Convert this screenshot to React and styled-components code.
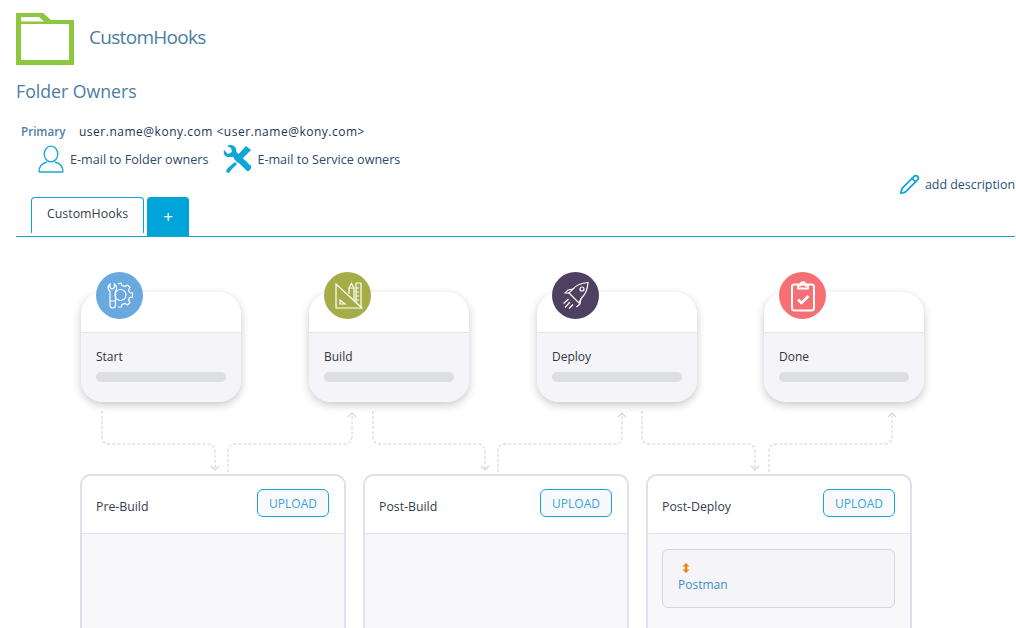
import React from "react";
import styled, { createGlobalStyle } from "styled-components";
import { Pencil } from "lucide-react";

const Global = createGlobalStyle`
  html, body { margin: 0; padding: 0; background: #fff; height: 628px; overflow: hidden; }
  body { font-family: "Open Sans", "Noto Sans", "Liberation Sans", sans-serif; color: #2b3a4a; }
`;

const Page = styled.div`
  width: 1016px;
  height: 628px;
  overflow: hidden;
  box-sizing: border-box;
  padding: 13px 1px 0 16px;
`;
const Header = styled.header`
  display: flex;
  align-items: flex-start;
  gap: 15px;
  height: 52px;
`;
const Title = styled.h1`
  margin: 10px 0 0;
  font-size: 19px;
  line-height: 28px;
  font-weight: 400;
  letter-spacing: -0.7px;
  color: #4a7da3;
`;
const SectionTitle = styled.h2`
  margin: 12px 0 0;
  font-size: 17.7px;
  line-height: 28px;
  font-weight: 400;
  color: #4a7da3;
`;
const OwnerRow = styled.div`
  display: flex;
  align-items: center;
  height: 20px;
  margin: 16px 0 0 5px;
  font-size: 12px;
`;
const OwnerLabel = styled.span`
  width: 58px;
  font-size: 11.6px;
  font-weight: 600;
  color: #4f7ea3;
`;
const OwnerValue = styled.span`
  color: #1c3458;
  letter-spacing: 0.51px;
`;
const MailRow = styled.div`
  display: flex;
  align-items: center;
  height: 28px;
  margin: 4px 0 0 22px;
  gap: 15px;
`;
const MailLink = styled.a`
  display: flex;
  align-items: center;
  gap: ${(p) => p.$gap}px;
  font-size: 12.6px;
  color: #2f4a6a;
`;
const DescRow = styled.div`
  display: flex;
  justify-content: flex-end;
  align-items: center;
  gap: 5px;
  height: 20px;
  margin-top: 1px;
  font-size: 12.4px;
  color: #2a5078;
`;
const Tabs = styled.nav`
  display: flex;
  align-items: flex-end;
  gap: 3px;
  height: 39px;
  margin-top: 3px;
  padding-left: 15px;
  border-bottom: 1px solid #0ca5d6;
`;
const Tab = styled.div`
  display: flex;
  justify-content: center;
  padding-top: 7px;
  box-sizing: border-box;
  width: 113px;
  height: 36px;
  margin-bottom: 3px;
  border: 1px solid #0ca5d6;
  border-bottom: none;
  border-radius: 4px 4px 0 0;
  font-size: 12.4px;
  line-height: 17px;
  color: #33414f;
`;
const AddTab = styled.div`
  display: flex;
  align-items: center;
  justify-content: center;
  width: 42px;
  height: 39px;
  border-radius: 4px 4px 0 0;
  background: #00a4d8;
  color: #fff;
  font-size: 17px;
`;
const Diagram = styled.section`
  margin-top: 55px;
`;
const Stages = styled.div`
  display: grid;
  grid-template-columns: repeat(4, 160px);
  column-gap: 68px;
  padding-left: 65px;
`;
const Stage = styled.div`
  position: relative;
  height: 110px;
  border-radius: 22px;
  background: #fff;
  box-shadow: 0 3px 9px rgba(60, 60, 70, 0.28);
  &:last-child {
    margin-left: -1px;
    margin-right: 1px;
  }
`;
const Badge = styled.div`
  position: absolute;
  left: 15px;
  top: -20px;
  width: 47px;
  height: 47px;
  border-radius: 50%;
  background: ${(p) => p.$color};
  display: flex;
  align-items: center;
  justify-content: center;
`;
const StageBody = styled.div`
  height: 70px;
  box-sizing: border-box;
  padding: 15px 15px 0;
  background: #f4f4f9;
  border-top: 1px solid #e2e2e8;
  border-radius: 0 0 22px 22px;
  position: relative;
  top: 40px;
  font-size: 12px;
  line-height: 18px;
  color: #30343f;
`;
const Bar = styled.div`
  height: 10px;
  margin-top: 6px;
  border-radius: 5px;
  background: #dcdee2;
`;
const Wires = styled.svg`
  display: block;
  width: 1000px;
  height: 72px;
`;
const Hooks = styled.div`
  display: grid;
  grid-template-columns: repeat(3, 266px);
  column-gap: 17px;
  padding-left: 64px;
`;
const Hook = styled.div`
  height: 220px;
  box-sizing: border-box;
  border: 2px solid #e0e0ea;
  border-radius: 11px;
  background: #f8f8fa;
`;
const HookHead = styled.div`
  display: flex;
  align-items: center;
  justify-content: space-between;
  box-sizing: border-box;
  height: 58px;
  padding: 0 15px 0 14px;
  background: #fff;
  border-radius: 9px 9px 0 0;
  border-bottom: 1px solid #e1e3ea;
  font-size: 12.3px;
  color: #33404d;
`;
const HookName = styled.span`
  margin-top: 3px;
`;
const Upload = styled.button`
  width: 72px;
  height: 28px;
  margin-top: -3px;
  padding: 0;
  border: 1px solid #14a6da;
  border-radius: 6px;
  background: #f8f9fc;
  color: #3ba4d8;
  font: 12px "Open Sans", "Noto Sans", sans-serif;
`;
const HookBody = styled.div`
  padding: 15px 15px 0 14px;
`;
const Asset = styled.div`
  height: 59px;
  box-sizing: border-box;
  padding: 13px 15px 0;
  border: 1px solid #d4d5de;
  border-radius: 6px;
  background: #f4f4f9;
`;
const AssetIcon = styled.svg`
  display: block;
  margin-left: 4px;
`;
const AssetName = styled.div`
  margin-top: 4px;
  font-size: 12px;
  line-height: 16px;
  color: #3b90c6;
`;

const FolderIcon = () => (
  <svg width="58" height="52" viewBox="0 0 58 52">
    <path fillRule="evenodd" fill="#8dc63f" d="M0 0H27L35 7H58V52H0ZM5 11V47H53V11ZM5 4V8.5H28L23 4Z" />
  </svg>
);
const UserIcon = () => (
  <svg width="26" height="28" viewBox="0 0 26 28" fill="none" stroke="#14a6da" strokeWidth="1.3">
    <ellipse cx="13" cy="9" rx="6.8" ry="7.8" />
    <path d="M1 27C1 21 5 18 9 17M25 27C25 21 21 18 17 17M1 27H25" />
  </svg>
);
const ToolsIcon = () => (
  <svg width="29" height="28" viewBox="0 0 29 28">
    <path fill="#0ea5d8" d="M1 5L5 9L9 7L8 3L4 1C7 -1 12 0 13 4L13.5 7L28 21C29 23 26 27 24 26L10 12L6 12C2 12 0 9 1 5Z" />
    <path fill="#0ea5d8" d="M23 1L28 5L15 18L11 14ZM12 17L14 19L8 25L6 28L3 27L4 24L6 22Z" />
  </svg>
);
const StartGlyph = () => (
  <svg width="30" height="30" viewBox="0 0 30 30" fill="none" stroke="#fff" strokeWidth="1.2">
    <path d="M13 3L16 2L17 4.5L20 5.5L22.5 4L25 6.5L23.5 9L24.5 11.5L27.5 12V16L24.5 16.5L23.5 19L25 21.5L22.5 24L20 22.5L17 23.5L16.5 26H13" />
    <circle cx="15.5" cy="14" r="5.5" />
    <path d="M5 3V6.5L7 8L9.5 6.5V3C12 5 12 8 10.5 10V24C10.5 28 5 28 5 24V10.5C2.5 8 3 5 5 3ZM5 20H10.5" />
  </svg>
);
const BuildGlyph = () => (
  <svg width="30" height="30" viewBox="0 0 30 30" fill="none" stroke="#fff" strokeWidth="1.2">
    <path d="M3 3V27H29L3 3ZM7 19V23H12Z" />
    <path d="M16 13V7L18.5 2.5L21 7V19M16 7H21" />
    <path d="M23 2H28V27M23 2V21M23 7H26M23 11H26M23 15H26M23 19H26" />
  </svg>
);
const RocketGlyph = () => (
  <svg width="30" height="30" viewBox="0 0 30 30" fill="none" stroke="#fff" strokeWidth="1.2">
    <path d="M12 8C15 4.5 20 2 27 1.5C26.5 9 24 14 20 17.5L18 22L15.5 19.5L10.5 14.5L8 12L12 8ZM10.5 14.5L15.5 19.5" />
    <circle cx="21" cy="8" r="2" />
    <path d="M12 8L7 9L4 12L8 12M20 17.5L19 23L15.5 26" />
    <path d="M7.5 18L2.5 22.5M9 21L4 26.5M12 23.5L8 27.5" />
  </svg>
);
const ClipGlyph = () => (
  <svg width="26" height="32" viewBox="0 0 26 32" fill="none" stroke="#fff" strokeWidth="2" strokeLinejoin="round">
    <rect x="2" y="4.5" width="22" height="26" rx="2.5" />
    <path d="M8 8.5V5.5H10.5C10.5 1 15.5 1 15.5 5.5H18V8.5Z" />
    <path d="M8 19.5L11.5 23L18.5 16" strokeWidth="2.6" />
  </svg>
);

const stages = [
  { name: "Start", color: "#69a9df", glyph: <StartGlyph /> },
  { name: "Build", color: "#a5ad49", glyph: <BuildGlyph /> },
  { name: "Deploy", color: "#4f3f60", glyph: <RocketGlyph /> },
  { name: "Done", color: "#f66f75", glyph: <ClipGlyph /> },
];
const links = [
  [102, 215, 228, 352],
  [373, 485, 498, 622],
  [642, 755, 769, 892],
];

export default function App() {
  return (
    <Page>
      <Global />
      <Header>
        <FolderIcon />
        <Title>CustomHooks</Title>
      </Header>
      <SectionTitle>Folder Owners</SectionTitle>
      <OwnerRow>
        <OwnerLabel>Primary</OwnerLabel>
        <OwnerValue>user.name@kony.com &lt;user.name@kony.com&gt;</OwnerValue>
      </OwnerRow>
      <MailRow>
        <MailLink $gap={6}><UserIcon />E-mail to Folder owners</MailLink>
        <MailLink $gap={5}><ToolsIcon />E-mail to Service owners</MailLink>
      </MailRow>
      <DescRow>
        <Pencil size={21} color="#0ea5d8" strokeWidth={2} />
        add description
      </DescRow>
      <Tabs>
        <Tab>CustomHooks</Tab>
        <AddTab>+</AddTab>
      </Tabs>
      <Diagram>
        <Stages>
          {stages.map((s) => (
            <Stage key={s.name}>
              <Badge $color={s.color}>{s.glyph}</Badge>
              <StageBody>
                {s.name}
                <Bar />
              </StageBody>
            </Stage>
          ))}
        </Stages>
        <Wires viewBox="0 0 1000 72" fill="none" stroke="#d3d4d8" strokeWidth="1.1" strokeDasharray="3 2">
          {links.map(([a, b, c, d]) => (
            <g key={a}>
              <path d={`M${a - 16} 9V34Q${a - 16} 42 ${a - 8} 42H${b - 24}Q${b - 16} 42 ${b - 16} 50V68`} />
              <path strokeDasharray="none" d={`M${b - 20} 64L${b - 16} 68L${b - 12} 64`} />
              <path d={`M${c - 16} 70V50Q${c - 16} 42 ${c - 8} 42H${d - 24}Q${d - 16} 42 ${d - 16} 34V11`} />
              <path strokeDasharray="none" d={`M${d - 20} 15L${d - 16} 11L${d - 12} 15`} />
            </g>
          ))}
        </Wires>
        <Hooks>
          <Hook>
            <HookHead><HookName>Pre-Build</HookName><Upload>UPLOAD</Upload></HookHead>
          </Hook>
          <Hook>
            <HookHead><HookName>Post-Build</HookName><Upload>UPLOAD</Upload></HookHead>
          </Hook>
          <Hook>
            <HookHead><HookName>Post-Deploy</HookName><Upload>UPLOAD</Upload></HookHead>
            <HookBody>
              <Asset>
                <AssetIcon width="8" height="10" viewBox="0 0 8 10" fill="#e8850c">
                  <path d="M4 0L7.5 3.5H5.2V6.5H7.5L4 10L0.5 6.5H2.8V3.5H0.5Z" />
                </AssetIcon>
                <AssetName>Postman</AssetName>
              </Asset>
            </HookBody>
          </Hook>
        </Hooks>
      </Diagram>
    </Page>
  );
}
